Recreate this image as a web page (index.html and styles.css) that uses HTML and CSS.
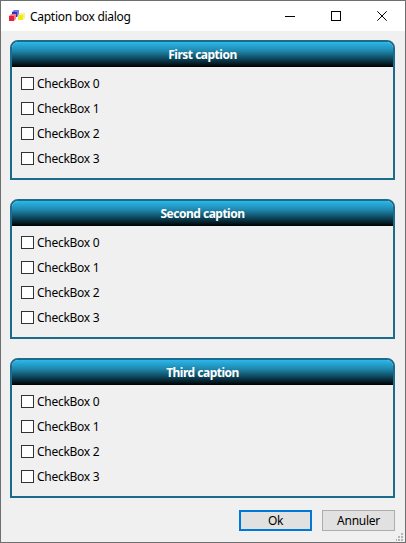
FILE: index.html
```html
<!DOCTYPE html>
<html lang="fr">
<head>
<meta charset="utf-8">
<title>Caption box dialog</title>
<link rel="stylesheet" href="styles.css">
</head>
<body>
<div class="window">
  <header class="titlebar">
    <svg class="app-icon" width="18" height="14" viewBox="0 0 18 14">
      <rect x="4" y="3" width="5" height="5" fill="#3034b8"/><path d="M4 3l2-2h5l-2 2zM9 3l2-2v5l-2 2z" fill="#7478e0"/>
      <rect x="10" y="6" width="5" height="5" fill="#f2e81e"/><path d="M10 6l2-2h5l-2 2zM15 6l2-2v5l-2 2z" fill="#f8f28c"/>
      <rect x="1" y="7" width="5" height="5" fill="#e4203c"/><path d="M1 7l2-2h5l-2 2zM6 7l2-2v5l-2 2z" fill="#f28088"/>
    </svg>
    <span class="title">Caption box dialog</span>
    <div class="controls">
      <svg class="ctl" width="10" height="10" viewBox="0 0 10 10"><path d="M0 5.5h10" stroke="#000" fill="none"/></svg>
      <svg class="ctl" width="10" height="10" viewBox="0 0 10 10"><rect x=".5" y=".5" width="9" height="9" stroke="#000" fill="none"/></svg>
      <svg class="ctl" width="10" height="10" viewBox="0 0 10 10"><path d="M.3.3l9.4 9.4M9.7.3L.3 9.7" stroke="#000" stroke-width="1" fill="none"/></svg>
    </div>
  </header>
  <main class="content">
    <section class="box">
      <h2 class="caption">First caption</h2>
      <div class="rows">
        <label class="row"><span class="check"></span>CheckBox 0</label>
        <label class="row"><span class="check"></span>CheckBox 1</label>
        <label class="row"><span class="check"></span>CheckBox 2</label>
        <label class="row"><span class="check"></span>CheckBox 3</label>
      </div>
    </section>
    <section class="box">
      <h2 class="caption">Second caption</h2>
      <div class="rows">
        <label class="row"><span class="check"></span>CheckBox 0</label>
        <label class="row"><span class="check"></span>CheckBox 1</label>
        <label class="row"><span class="check"></span>CheckBox 2</label>
        <label class="row"><span class="check"></span>CheckBox 3</label>
      </div>
    </section>
    <section class="box">
      <h2 class="caption">Third caption</h2>
      <div class="rows">
        <label class="row"><span class="check"></span>CheckBox 0</label>
        <label class="row"><span class="check"></span>CheckBox 1</label>
        <label class="row"><span class="check"></span>CheckBox 2</label>
        <label class="row"><span class="check"></span>CheckBox 3</label>
      </div>
    </section>
    <footer class="buttons">
      <button class="btn btn-default">Ok</button>
      <button class="btn">Annuler</button>
    </footer>
  </main>
  <svg class="grip" width="8" height="8" viewBox="0 0 8 8" fill="#b4b4b4"><rect x="5" y="0" width="2" height="2"/><rect x="2" y="3" width="2" height="2"/><rect x="5" y="3" width="2" height="2"/><rect x="0" y="6" width="1" height="2"/><rect x="2" y="6" width="2" height="2"/><rect x="5" y="6" width="2" height="2"/></svg>
</div>
</body>
</html>
```
FILE: styles.css
```css
* { box-sizing: border-box; }
html, body { margin: 0; padding: 0; }
body {
  font-family: "Noto Sans", "Open Sans", sans-serif;
  font-size: 12px;
  letter-spacing: -0.28px;
  color: #000;
}
.window {
  position: relative;
  width: 406px;
  height: 543px;
  border: 1px solid #6f6f6f;
  background: #f0f0f0;
  display: flex;
  flex-direction: column;
}
.titlebar {
  height: 30px;
  flex: none;
  background: #fff;
  display: flex;
  align-items: center;
  padding-left: 7px;
}
.app-icon { flex: none; }
.title { margin-left: 4px; }
.controls {
  margin-left: auto;
  display: flex;
  gap: 36px;
  padding-right: 18px;
}
.ctl { display: block; }
.content {
  flex: 1;
  padding: 9px 10px 0 9px;
  display: flex;
  flex-direction: column;
  gap: 19px;
}
.box {
  height: 140px;
  border: 2px solid #1c6a8c;
  border-radius: 8px 8px 0 0;
  overflow: hidden;
}
.caption {
  margin: 0;
  height: 25px;
  background: linear-gradient(#2bb8ea 0%, #1f88ae 35%, #0c4054 70%, #000 100%);
  color: #fff;
  font-size: 12px;
  font-weight: 700;
  letter-spacing: -0.5px;
  line-height: 25px;
  text-align: center;
}
.rows { padding: 4px 0 0 9px; }
.row {
  height: 25px;
  display: flex;
  align-items: center;
  gap: 3px;
}
.check {
  width: 13px;
  height: 13px;
  flex: none;
  border: 1px solid #333;
  background: #fff;
}
.buttons {
  display: flex;
  justify-content: flex-end;
  gap: 10px;
  margin-top: -7px;
}
.btn {
  width: 73px;
  height: 21px;
  padding: 0;
  border: 1px solid #adadad;
  background: #e1e1e1;
  font: inherit;
  letter-spacing: inherit;
  color: #000;
}
.btn-default { border: 2px solid #0078d7; }
.grip { position: absolute; right: 1px; bottom: 1px; }
```
